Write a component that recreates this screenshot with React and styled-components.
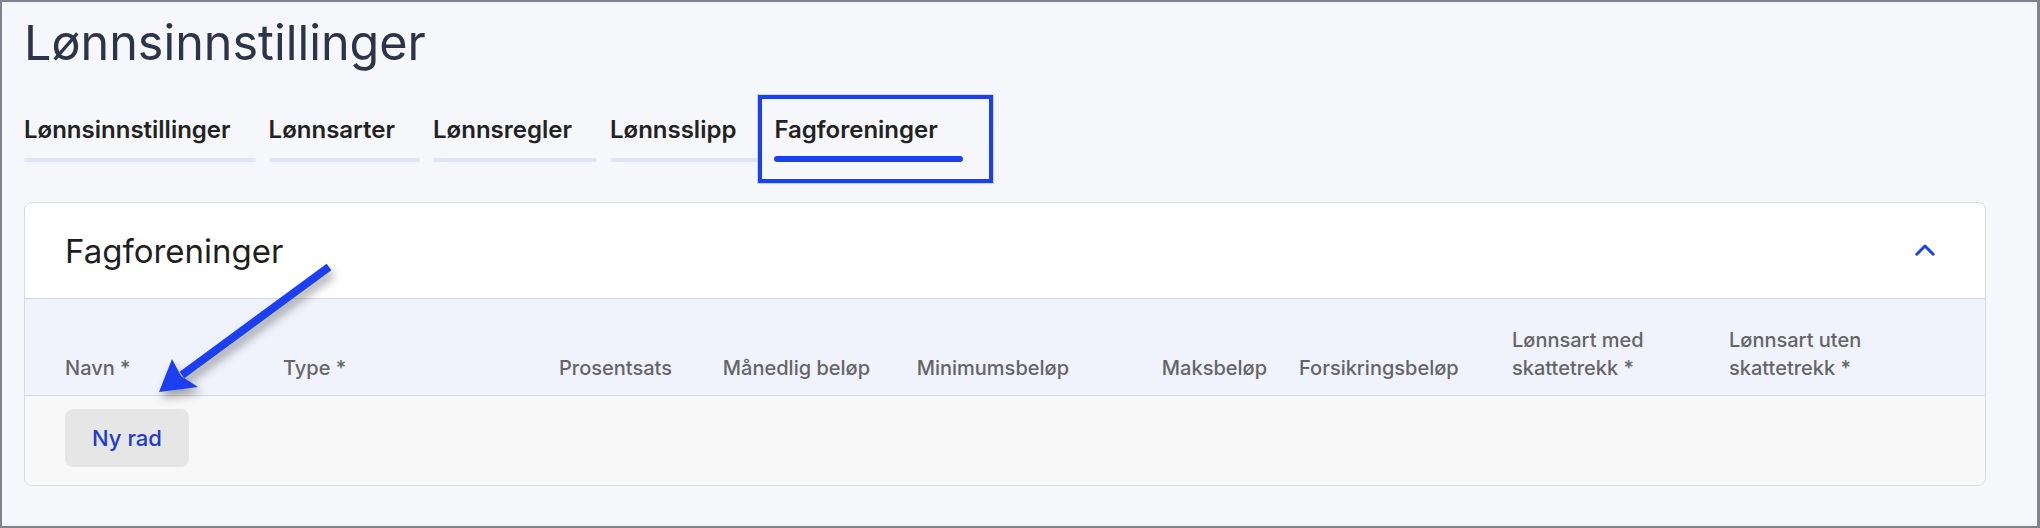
import React from "react";
import styled, { createGlobalStyle } from "styled-components";

const GlobalStyle = createGlobalStyle`
  * {
    box-sizing: border-box;
  }

  body {
    margin: 0;
    font-family: "Inter", "Noto Sans", sans-serif;
  }
`;

const Frame = styled.div`
  position: relative;
  width: 2040px;
  height: 528px;
  overflow: hidden;
  border: 2px solid #7f848f;
  border-right-width: 3px;
  background-color: #f6f7fb;
  padding: 12px 51px 0 22px;
`;

const PageTitle = styled.h1`
  margin: 0;
  font-size: 48.5px;
  line-height: 58px;
  font-weight: 400;
  color: #2c3447;
`;

const TabList = styled.nav`
  display: flex;
  gap: 13px;
  margin-top: 42px;
`;

const Tab = styled.div`
  position: relative;
  display: flex;
  flex-direction: column;
  cursor: pointer;
`;

const TabLabel = styled.span`
  padding-right: 25px;
  font-size: 24px;
  line-height: 32px;
  font-weight: 600;
  color: #222;
  white-space: nowrap;
`;

const TabBar = styled.span`
  display: block;
  height: ${(p) => (p.$active ? "6px" : "4px")};
  margin-top: ${(p) => (p.$active ? "10px" : "12px")};
  border-radius: 3px;
  background-color: ${(p) => (p.$active ? "#1c3ff0" : "#e0e6f8")};
`;

/* annotation frame drawn round the active tab */
const Highlight = styled.span`
  position: absolute;
  top: -19px;
  bottom: -21px;
  left: -16px;
  right: -30px;
  border: 4px solid #1c3ff0;
  box-shadow: 0 0 0 1px rgba(28, 63, 240, 0.2);
  pointer-events: none;
`;

const Card = styled.section`
  margin-top: 40px;
  border: 1px solid #d7dae0;
  border-radius: 8px;
  overflow: hidden;
  background-color: #fff;
`;

const CardHeader = styled.header`
  display: flex;
  justify-content: space-between;
  align-items: center;
  height: 96px;
  padding: 0 50px 0 40px;
  border-bottom: 1px solid #d7dae0;
`;

const CardTitle = styled.h2`
  margin: 0;
  font-size: 33px;
  font-weight: 400;
  color: #1f1f1f;
`;

const Chevron = styled.svg`
  display: block;
  margin-top: -2px;
  cursor: pointer;
`;

const TableHead = styled.div`
  display: grid;
  grid-template-columns: 218px 221px 200px 198px 199px 198px 213px 217px 1fr;
  align-items: end;
  height: 97px;
  padding: 0 0 13px 24px;
  background-color: #f0f3fc;
  border-bottom: 1px solid #d7dae0;
`;

const HeadCell = styled.div`
  padding: 0 16px;
  font-size: 20px;
  line-height: 28px;
  font-weight: 500;
  color: #656565;
  text-align: ${(p) => p.$align};
`;

const TableBody = styled.div`
  padding: 13px 40px 18px;
  background-color: #f8f8f8;
`;

const AddRowButton = styled.button`
  width: 124px;
  height: 58px;
  border: none;
  border-radius: 8px;
  background-color: #e6e6e6;
  font-family: inherit;
  font-size: 22px;
  font-weight: 500;
  color: #1e3ccc;
  cursor: pointer;
`;

const Annotation = styled.svg`
  position: absolute;
  left: -2px;
  top: -2px;
  pointer-events: none;
  filter: drop-shadow(3px 6px 5px rgba(0, 0, 0, 0.35));
`;

const tabs = [
  "Lønnsinnstillinger",
  "Lønnsarter",
  "Lønnsregler",
  "Lønnsslipp",
  "Fagforeninger",
];

const columns = [
  { label: "Navn *", align: "left" },
  { label: "Type *", align: "left" },
  { label: "Prosentsats", align: "right" },
  { label: "Månedlig beløp", align: "right" },
  { label: "Minimumsbeløp", align: "right" },
  { label: "Maksbeløp", align: "right" },
  { label: "Forsikringsbeløp", align: "left" },
  { label: "Lønnsart med skattetrekk *", align: "left" },
  { label: "Lønnsart uten skattetrekk *", align: "left" },
];

const App = () => {
  const active = "Fagforeninger";

  return (
    <>
      <GlobalStyle />
      <Frame>
        <PageTitle>Lønnsinnstillinger</PageTitle>
        <TabList>
          {tabs.map((name) => (
            <Tab key={name}>
              <TabLabel>{name}</TabLabel>
              <TabBar $active={name === active} />
              {name === active && <Highlight />}
            </Tab>
          ))}
        </TabList>

        <Card>
          <CardHeader>
            <CardTitle>Fagforeninger</CardTitle>
            <Chevron width="20" height="12" viewBox="0 0 20 12">
              <polyline
                points="1.8,10.2 10,2 18.2,10.2"
                fill="none"
                stroke="#1c3ff0"
                strokeWidth="3"
                strokeLinecap="round"
                strokeLinejoin="round"
              />
            </Chevron>
          </CardHeader>
          <TableHead>
            {columns.map((col) => (
              <HeadCell key={col.label} $align={col.align}>
                {col.label}
              </HeadCell>
            ))}
          </TableHead>
          <TableBody>
            <AddRowButton>Ny rad</AddRowButton>
          </TableBody>
        </Card>

        <Annotation width="2040" height="528" viewBox="0 0 2040 528">
          <line
            x1="329"
            y1="267"
            x2="182"
            y2="375"
            stroke="#1d3ff2"
            strokeWidth="8"
          />
          <polygon points="159,392 172,359 181,376 198,387" fill="#1d3ff2" />
        </Annotation>
      </Frame>
    </>
  );
};

export default App;
